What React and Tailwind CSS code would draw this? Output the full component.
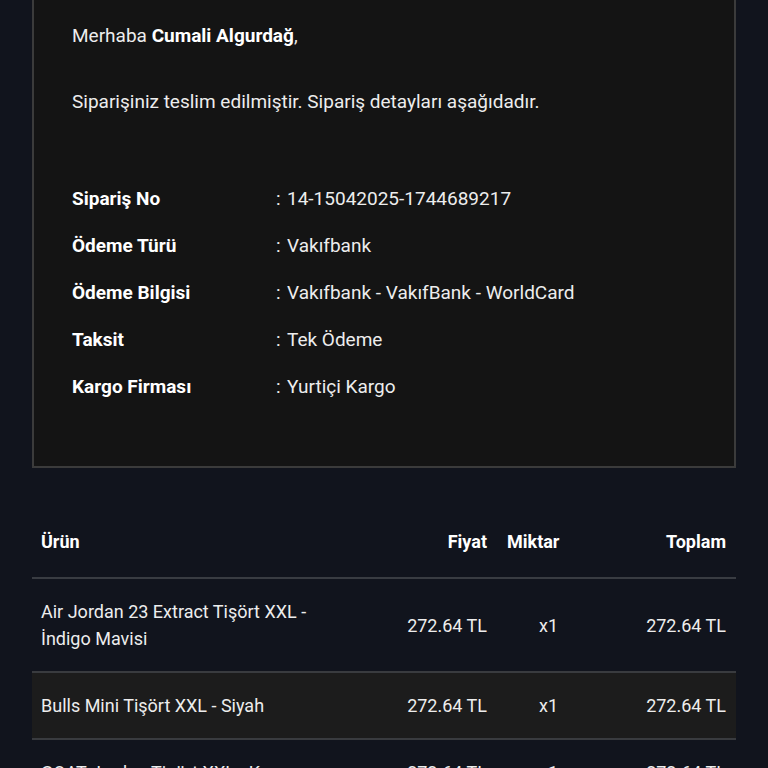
import React from 'react';

const info = [
  { label: 'Sipariş No', value: '14-15042025-1744689217' },
  { label: 'Ödeme Türü', value: 'Vakıfbank' },
  { label: 'Ödeme Bilgisi', value: 'Vakıfbank - VakıfBank - WorldCard' },
  { label: 'Taksit', value: 'Tek Ödeme' },
  { label: 'Kargo Firması', value: 'Yurtiçi Kargo' },
];

const items = [
  { name: 'Air Jordan 23 Extract Tişört XXL - İndigo Mavisi', price: '272.64 TL', qty: 'x1', total: '272.64 TL' },
  { name: 'Bulls Mini Tişört XXL - Siyah', price: '272.64 TL', qty: 'x1', total: '272.64 TL' },
  { name: 'GOAT Jordan Tişört XXL - Kırmızı', price: '272.64 TL', qty: 'x1', total: '272.64 TL' },
];

const App = () => {
  return (
    <div className="min-h-screen bg-[#11141d] px-8 text-[18px] text-[#ededed] font-['Roboto',sans-serif]">
      {/* Order card */}
      <div className="bg-[#141414] border-2 border-t-0 border-[#3b3b3b] px-[38px] pt-[22px] pb-[55px] text-[19px]">
        <p className="leading-[28px]">
          Merhaba <span className="font-bold text-white">Cumali Algurdağ</span>,
        </p>
        <p className="mt-[38px] leading-[28px]">
          Siparişiniz teslim edilmiştir. Sipariş detayları aşağıdadır.
        </p>

        <div className="mt-[60px]">
          {info.map(row => (
            <div key={row.label} className="flex items-center h-[47px]">
              <span className="w-[204px] font-bold text-white">{row.label}</span>
              <span className="w-[11px]">:</span>
              <span>{row.value}</span>
            </div>
          ))}
        </div>
      </div>

      {/* Products table */}
      <div className="mt-[41px]">
        <div className="grid grid-cols-[320px_145px_71px_168px] border-b-2 border-[#393c42] font-bold text-white leading-[26px]">
          <div className="px-[9px] pt-5 pb-[22px]">Ürün</div>
          <div className="px-[10px] pt-5 pb-[22px] text-right">Fiyat</div>
          <div className="px-[10px] pt-5 pb-[22px] text-right">Miktar</div>
          <div className="px-[10px] pt-5 pb-[22px] text-right">Toplam</div>
        </div>
        {items.map((item, i) => (
          <div
            key={item.name}
            className={
              'grid grid-cols-[320px_145px_71px_168px] items-center border-b-2 border-[#393b3f] leading-[27px] ' +
              (i % 2 === 1 ? 'bg-[#1c1c1c]' : '')
            }
          >
            <div className="px-[9px] py-[19px]">{item.name}</div>
            <div className="px-[10px] py-[19px] text-right">{item.price}</div>
            <div className="px-[10px] py-[19px] text-right">{item.qty}</div>
            <div className="px-[10px] py-[19px] text-right">{item.total}</div>
          </div>
        ))}
      </div>
    </div>
  );
};

export default App;
